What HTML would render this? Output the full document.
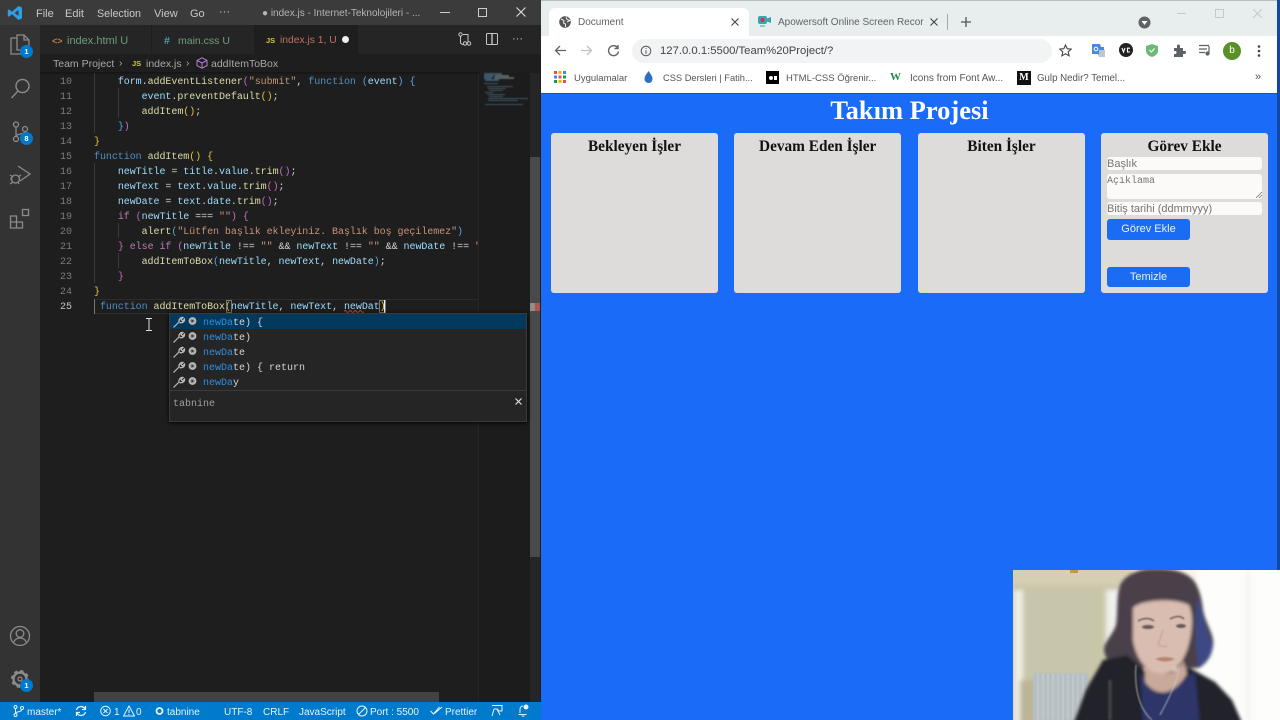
<!DOCTYPE html>
<html lang="tr"><head><meta charset="utf-8"><title>Recording</title>
<style>
html,body{margin:0;padding:0;width:1280px;height:720px;overflow:hidden;background:#1e1e1e;font-family:"Liberation Sans",sans-serif}
div,span{box-sizing:border-box}
.a{position:absolute;white-space:nowrap}
.menu{top:6px;font-size:11px;line-height:16px;color:#c8c8c8}
.ln{position:absolute;left:40px;width:32px;margin-top:2px;text-align:right;font:10px/15px "Liberation Mono",monospace;color:#7c7c7c}
.cl{position:absolute;left:94px;width:384px;margin-top:2px;overflow:hidden;white-space:pre;font:10px/15px "Liberation Mono",monospace;letter-spacing:-.05px;color:#d4d4d4}
.v{color:#9cdcfe}.f{color:#dcdcaa}.k{color:#4d90c8}.c{color:#b67fb0}.s{color:#c99278}.y{color:#e3c53a}.p{color:#c06cc0}.b{color:#57a5e0}
.g{position:absolute;width:1px;background:#3a3a3a}
.st{top:704px;font-size:10px;line-height:18px;color:#e8f3fb;position:absolute;white-space:nowrap}
.row{position:absolute;left:203px;margin-top:1.500px;font:10px/15px "Liberation Mono",monospace;color:#d4d4d4;white-space:pre}
.row b{font-weight:normal;color:#2f8ee0}
.bm{top:72px;font-size:9.500px;line-height:13px;color:#555;position:absolute;white-space:nowrap}
.card{position:absolute;top:133px;width:167px;height:160px;padding-top:1px;background:#dddcda;border-radius:3px;text-align:center;font:bold 15.300px/26px "Liberation Serif",serif;color:#111}
.inp{position:absolute;left:1107px;width:155px;background:#fbfaf8;border-radius:3px;color:#757575;font-size:11px;padding-top:1px}
.btn{position:absolute;left:1107px;width:83px;background:#1a6cf5;border-radius:3px;color:#eef;font-size:11px;text-align:center;padding-top:1px}
</style></head><body>

<!-- VS Code -->
<div class="a" style="left:0;top:0;width:541px;height:720px;background:#1e1e1e;overflow:hidden">
<div class="a" style="left:0;top:0;width:541px;height:25px;background:#3b3b3b"></div>
<svg class="a" style="left:7px;top:5px" width="16" height="16" viewBox="0 0 16 16"><path d="M11.500 1 15 2.600v10.800L11.500 15 5 9.300 2 11.600.8 11V5l1.200-.6 3 2.300zM11.500 5 7.600 8l3.900 3z" fill="#2f9fe6"/></svg>
<div class="a menu" style="left:36px">File</div><div class="a menu" style="left:65px">Edit</div><div class="a menu" style="left:97px;font-size:10.700px">Selection</div><div class="a menu" style="left:154px">View</div><div class="a menu" style="left:190px">Go</div><div class="a menu" style="left:219px;top:4px">···</div>
<div class="a menu" style="left:262px;font-size:10px;color:#b5b5b5">● index.js - Internet-Teknolojileri - ...</div>
<div class="a" style="left:440px;top:12px;width:10px;height:1px;background:#ccc"></div>
<div class="a" style="left:478px;top:8px;width:9px;height:9px;border:1px solid #ccc"></div>
<svg class="a" style="left:516px;top:7px" width="10" height="10"><path d="M.5.5l9 9M9.500.5l-9 9" stroke="#ddd" stroke-width="1.100"/></svg>

<!-- tabs -->
<div class="a" style="left:40px;top:25px;width:501px;height:29px;background:#252526"></div>
<div class="a" style="left:254px;top:25px;width:104px;height:29px;background:#1e1e1e"></div>
<div class="a" style="left:151px;top:25px;width:1px;height:29px;background:#1e1e1e"></div>
<div class="a" style="left:52px;top:34px;font-size:9px;line-height:14px;color:#c9793f;font-weight:bold">&lt;&gt;</div>
<div class="a" style="left:67px;top:33px;font-size:11px;line-height:16px;color:#6f9c7e">index.html U</div>
<div class="a" style="left:164px;top:33px;font-size:10.500px;line-height:16px;color:#519aba;font-weight:bold">#</div>
<div class="a" style="left:178px;top:33px;font-size:10.500px;line-height:16px;color:#6f9c7e">main.css U</div>
<div class="a" style="left:266px;top:35px;font-size:7.500px;line-height:12px;color:#cbcb41;font-weight:bold">JS</div>
<div class="a" style="left:280px;top:33px;font-size:10.300px;line-height:16px;color:#c2705e">index.js 1, U</div>
<div class="a" style="left:342px;top:36px;width:7px;height:7px;border-radius:50%;background:#eee"></div>
<svg class="a" style="left:458px;top:32px" width="14" height="15" viewBox="0 0 14 15" fill="none" stroke="#c5c5c5"><circle cx="2.500" cy="2.500" r="1.700"/><circle cx="11" cy="11.500" r="1.700"/><circle cx="7" cy="11.500" r="1.700"/><path d="M2.500 4.500V11L5 13M5 2.500h5v7"/></svg>
<svg class="a" style="left:486px;top:33px" width="12" height="12" fill="none" stroke="#c5c5c5"><rect x=".5" y=".5" width="11" height="11" rx="1"/><path d="M6 .5v11" stroke-width="1.400"/></svg>
<div class="a" style="left:512px;top:32px;font-size:11px;line-height:14px;color:#c5c5c5">···</div>

<!-- breadcrumb -->
<div class="a" style="left:53px;top:57px;font-size:10.500px;line-height:15px;color:#a9a9a9">Team Project</div>
<div class="a" style="left:119px;top:56px;font-size:10px;line-height:15px;color:#a9a9a9">›</div>
<div class="a" style="left:132px;top:58px;font-size:7.500px;line-height:12px;color:#cbcb41;font-weight:bold">JS</div>
<div class="a" style="left:146px;top:57px;font-size:10.500px;line-height:15px;color:#a9a9a9">index.js</div>
<div class="a" style="left:186px;top:56px;font-size:10px;line-height:15px;color:#a9a9a9">›</div>
<svg class="a" style="left:196px;top:57px" width="12" height="12" viewBox="0 0 12 12" fill="none" stroke="#b180d7"><path d="M6 .8 11 3.400v5.200L6 11.200 1 8.600V3.400zM1 3.400 6 6l5-2.600M6 6v5.200"/></svg>
<div class="a" style="left:211px;top:57px;font-size:10.500px;line-height:15px;color:#a9a9a9">addItemToBox</div>
<div class="a" style="left:40px;top:72px;width:440px;height:3px;background:linear-gradient(#151515,#1e1e1e)"></div>

<!-- activity bar -->
<div class="a" style="left:0;top:25px;width:40px;height:677px;background:#333"></div>
<svg class="a" style="left:9px;top:33px" width="22" height="24" viewBox="0 0 22 24" fill="none" stroke="#8b8b8b" stroke-width="1.300"><path d="M8 5h-6v16h11v-4M8 2h7l5 5v10H8zM15 2v5h5"/></svg>
<svg class="a" style="left:10px;top:78px" width="22" height="22" fill="none" stroke="#8b8b8b" stroke-width="1.400"><circle cx="12.500" cy="8" r="6.500"/><path d="M8 13 1.500 20"/></svg>
<svg class="a" style="left:11px;top:121px" width="20" height="24" fill="none" stroke="#8b8b8b" stroke-width="1.300"><circle cx="5" cy="3.500" r="2.500"/><circle cx="5" cy="18" r="2.500"/><circle cx="14" cy="8" r="2.500"/><path d="M5 6v9.500M14 10.500c0 3-9 2-9 5"/></svg>
<svg class="a" style="left:9px;top:164px" width="22" height="24" fill="none" stroke="#8b8b8b" stroke-width="1.300"><path d="M9 2 21 10 11 17"/><circle cx="6.500" cy="15" r="4"/><path d="M1 11l3 2M1 15h2M1 20l3-2M12 11 9 13M10 20l-1-2"/></svg>
<svg class="a" style="left:9px;top:208px" width="22" height="22" fill="none" stroke="#8b8b8b" stroke-width="1.300"><path d="M1.500 8h6v6h-6zM1.500 14h6v6h-6zM7.500 14h6v6h-6z"/><rect x="13.500" y="1.500" width="6" height="6"/></svg>
<svg class="a" style="left:9px;top:625px" width="22" height="22" fill="none" stroke="#8b8b8b" stroke-width="1.300"><circle cx="11" cy="11" r="9.500"/><circle cx="11" cy="8.500" r="3.800"/><path d="M4.500 17.500c1.500-3.500 4-4.500 6.500-4.500s5 1 6.500 4.500"/></svg>
<svg class="a" style="left:9px;top:668px" width="22" height="22" fill="none" stroke="#8b8b8b" stroke-width="2.400"><circle cx="11" cy="11" r="6.500"/><circle cx="11" cy="11" r="7.500" stroke-dasharray="3 2.900" stroke-width="3"/><circle cx="11" cy="11" r="2" stroke-width="1.200"/></svg>
<div class="a" style="left:20px;top:45px;width:13px;height:13px;border-radius:50%;background:#007acc;color:#fff;font-size:7.500px;line-height:13px;text-align:center;font-weight:bold">1</div>
<div class="a" style="left:20px;top:132px;width:13px;height:13px;border-radius:50%;background:#007acc;color:#fff;font-size:7.500px;line-height:13px;text-align:center;font-weight:bold">8</div>
<div class="a" style="left:20px;top:679px;width:13px;height:13px;border-radius:50%;background:#007acc;color:#fff;font-size:7.500px;line-height:13px;text-align:center;font-weight:bold">1</div>

<!-- minimap region -->
<div class="a" style="left:478px;top:73px;width:52px;height:629px;background:#1c1c1c;border-left:1px solid #252525"></div>
<svg class="a" style="left:483px;top:72px" width="47" height="36" style="opacity:.6">
<defs><filter id="mm"><feGaussianBlur stdDeviation=".45"/></filter></defs>
<g filter="url(#mm)" opacity=".6">
<g fill="#4d7f9e"><rect x="1" y="1" width="18" height="2"/><rect x="1" y="3" width="10" height="2"/><rect x="12" y="3" width="14" height="2" fill="#7d8f86"/><rect x="1" y="5" width="8" height="2"/><rect x="11" y="5" width="20" height="2" fill="#7d8f86"/><rect x="2" y="7" width="14" height="2"/></g>
<g fill="#58798f"><rect x="1" y="11" width="14" height="1"/><rect x="4" y="14" width="26" height="1"/><rect x="5" y="16" width="18" height="1"/><rect x="6" y="18" width="14" height="1"/><rect x="2" y="20" width="8" height="1"/><rect x="4" y="22" width="18" height="1"/><rect x="6" y="24" width="14" height="1"/><rect x="5" y="26" width="40" height="1"/><rect x="5" y="28" width="30" height="1"/><rect x="2" y="32" width="38" height="1"/></g>
</g>
</svg>
<div class="a" style="left:530px;top:73px;width:10px;height:629px;background:#252525"></div>
<div class="a" style="left:530px;top:157px;width:10px;height:400px;background:#4a4a4a"></div>
<div class="a" style="left:530px;top:303px;width:10px;height:8px;background:#8f8f8f"></div>
<div class="a" style="left:535px;top:303px;width:5px;height:8px;background:#b4544c"></div>
<div class="a" style="left:94px;top:692px;width:345px;height:10px;background:#424242"></div>

<!-- indent guides -->
<div class="g" style="left:94px;top:73px;height:60px"></div>
<div class="g" style="left:118px;top:88px;height:30px"></div>
<div class="g" style="left:94px;top:163px;height:120px"></div>
<div class="g" style="left:118px;top:223px;height:15px"></div>
<div class="g" style="left:118px;top:253px;height:15px"></div>
<div class="a" style="left:94px;top:299px;width:384px;height:15px;border-top:1px solid #2c2c2c;border-bottom:1px solid #2c2c2c"></div>
<div class="a" style="left:94px;top:299px;width:1px;height:15px;background:#777"></div>

<!-- line numbers -->
<div class="ln" style="top:73px">10</div><div class="ln" style="top:88px">11</div><div class="ln" style="top:103px">12</div><div class="ln" style="top:118px">13</div><div class="ln" style="top:133px">14</div><div class="ln" style="top:148px">15</div><div class="ln" style="top:163px">16</div><div class="ln" style="top:178px">17</div><div class="ln" style="top:193px">18</div><div class="ln" style="top:208px">19</div><div class="ln" style="top:223px">20</div><div class="ln" style="top:238px">21</div><div class="ln" style="top:253px">22</div><div class="ln" style="top:268px">23</div><div class="ln" style="top:283px">24</div><div class="ln" style="top:298px;color:#c6c6c6">25</div>

<!-- code -->
<div class="cl" style="top:73px">    <span class="v">form</span>.<span class="f">addEventListener</span><span class="p">(</span><span class="s">"submit"</span>, <span class="k">function</span> <span class="b">(</span><span class="v">event</span><span class="b">)</span> <span class="b">{</span></div>
<div class="cl" style="top:88px">        <span class="v">event</span>.<span class="f">preventDefault</span><span class="y">()</span>;</div>
<div class="cl" style="top:103px">        <span class="f">addItem</span><span class="y">()</span>;</div>
<div class="cl" style="top:118px">    <span class="b">}</span><span class="p">)</span></div>
<div class="cl" style="top:133px"><span class="y">}</span></div>
<div class="cl" style="top:148px"><span class="k">function</span> <span class="f">addItem</span><span class="y">()</span> <span class="y">{</span></div>
<div class="cl" style="top:163px">    <span class="v">newTitle</span> = <span class="v">title</span>.<span class="v">value</span>.<span class="f">trim</span><span class="p">()</span>;</div>
<div class="cl" style="top:178px">    <span class="v">newText</span> = <span class="v">text</span>.<span class="v">value</span>.<span class="f">trim</span><span class="p">()</span>;</div>
<div class="cl" style="top:193px">    <span class="v">newDate</span> = <span class="v">text</span>.<span class="v">date</span>.<span class="f">trim</span><span class="p">()</span>;</div>
<div class="cl" style="top:208px">    <span class="c">if</span> <span class="p">(</span><span class="v">newTitle</span> === <span class="s">""</span><span class="p">)</span> <span class="p">{</span></div>
<div class="cl" style="top:223px">        <span class="f">alert</span><span class="b">(</span><span class="s">"Lütfen başlık ekleyiniz. Başlık boş geçilemez"</span><span class="b">)</span></div>
<div class="cl" style="top:238px">    <span class="p">}</span> <span class="c">else if</span> <span class="p">(</span><span class="v">newTitle</span> !== <span class="s">""</span> &amp;&amp; <span class="v">newText</span> !== <span class="s">""</span> &amp;&amp; <span class="v">newDate</span> !== <span class="s">""</span></div>
<div class="cl" style="top:253px">        <span class="f">addItemToBox</span><span class="b">(</span><span class="v">newTitle</span>, <span class="v">newText</span>, <span class="v">newDate</span><span class="b">)</span>;</div>
<div class="cl" style="top:268px">    <span class="p">}</span></div>
<div class="cl" style="top:283px"><span class="y">}</span></div>
<div class="cl" style="top:298px"> <span class="k">function</span> <span class="f">addItemToBox</span><span class="y">(</span><span class="v">newTitle</span>, <span class="v">newText</span>, <span class="v">newDat</span><span class="y">)</span></div>
<div class="a" style="left:226px;top:300px;width:6px;height:13px;border:1px solid #777"></div>
<div class="a" style="left:379px;top:300px;width:7px;height:13px;border:1px solid #777"></div>
<div class="a" style="left:384px;top:300px;width:1px;height:13px;background:#eee"></div>
<svg class="a" style="left:344px;top:310px" width="20" height="3"><path d="M0 1.500q1.250-2 2.500 0t2.500 0 2.500 0 2.500 0 2.500 0 2.500 0 2.500 0 2.500 0" fill="none" stroke="#c8443c"/></svg>
<!-- I-beam -->
<svg class="a" style="left:145px;top:318px" width="8" height="13"><path d="M1 .5h6M1 12.500h6M4 .5v12" stroke="#ddd" fill="none"/></svg>

<!-- suggest -->
<div class="a" style="left:169px;top:313px;width:358px;height:109px;background:#252526;border:1px solid #3a3a3a;box-shadow:0 1px 4px #000"></div>
<div class="a" style="left:170px;top:314px;width:356px;height:15px;background:#04395e"></div>
<div class="a" style="left:170px;top:390px;width:356px;height:1px;background:#3a3a3a"></div>
<svg class="a" style="left:172px;top:315px" width="26" height="76" fill="none">
<g stroke="#bdbdbd" stroke-width="1.200"><path d="M1.500 12.500 7 7M7 7c-.5-3 2-5 4-4.500L9 4.500l1.500 1.500 2-2c.5 2-1.500 4.500-5 3.500"/><path d="M1.500 27.500 7 22M7 22c-.5-3 2-5 4-4.500L9 19.500l1.500 1.500 2-2c.5 2-1.500 4.500-5 3.500"/><path d="M1.500 42.500 7 37M7 37c-.5-3 2-5 4-4.500L9 34.500l1.500 1.500 2-2c.5 2-1.500 4.500-5 3.500"/><path d="M1.500 57.500 7 52M7 52c-.5-3 2-5 4-4.500L9 49.500l1.500 1.500 2-2c.5 2-1.500 4.500-5 3.500"/><path d="M1.500 72.500 7 67M7 67c-.5-3 2-5 4-4.500L9 64.500l1.500 1.500 2-2c.5 2-1.500 4.500-5 3.500"/></g>
<g fill="#999" stroke="#bdbdbd" stroke-width="1.400"><circle cx="20.500" cy="6" r="3.200"/><circle cx="20.500" cy="21" r="3.200"/><circle cx="20.500" cy="36" r="3.200"/><circle cx="20.500" cy="51" r="3.200"/><circle cx="20.500" cy="66" r="3.200"/></g>
<g fill="#2a2a2a"><path d="M19.500 4.500l2.500 1.500-2.500 1.500zM19.500 19.500l2.500 1.500-2.500 1.500zM19.500 34.500l2.500 1.500-2.500 1.500zM19.500 49.500l2.500 1.500-2.500 1.500zM19.500 64.500l2.500 1.500-2.500 1.500z"/></g></svg>
<div class="row" style="top:314px"><b>newDa</b>te) {</div>
<div class="row" style="top:329px"><b>newDa</b>te)</div>
<div class="row" style="top:344px"><b>newDa</b>te</div>
<div class="row" style="top:359px"><b>newDa</b>te) { return</div>
<div class="row" style="top:374px"><b>newDa</b>y</div>
<div class="a" style="left:173px;top:397px;font:10px/15px 'Liberation Mono',monospace;color:#a0a0a0">tabnine</div>
<svg class="a" style="left:515px;top:398px" width="7" height="7"><path d="M.5.5l6 6M6.500.5l-6 6" stroke="#ddd" stroke-width="1.200"/></svg>

<!-- status -->
<div class="a" style="left:0;top:702px;width:541px;height:18px;background:#007acc"></div>
<svg class="a" style="left:13px;top:705px" width="11" height="12" fill="none" stroke="#e8f3fb"><circle cx="2.500" cy="2" r="1.500"/><circle cx="2.500" cy="10" r="1.500"/><circle cx="9" cy="3" r="1.500"/><path d="M2.500 3.500v5M9 4.500c0 3-6.500 1.500-6.500 4"/></svg>
<div class="st" style="left:27px">master*</div>
<svg class="a" style="left:75px;top:705px" width="12" height="12" fill="none" stroke="#e8f3fb" stroke-width="1.300"><path d="M1.500 5a4.600 4.600 0 0 1 8.500-1M10.500 7a4.600 4.600 0 0 1-8.500 1M10.500 1v3.500H7M1.500 11V7.500H5"/></svg>
<svg class="a" style="left:100px;top:705px" width="11" height="12" fill="none" stroke="#e8f3fb"><circle cx="5.500" cy="6" r="4.800"/><path d="M3.500 4l4 4M7.500 4l-4 4"/></svg>
<div class="st" style="left:114px">1</div>
<svg class="a" style="left:123px;top:705px" width="12" height="12" fill="none" stroke="#e8f3fb"><path d="M6 1 11.500 11H.5zM6 4.500v3.500M6 9v1"/></svg>
<div class="st" style="left:136px">0</div>
<svg class="a" style="left:155px;top:706px" width="9" height="10"><circle cx="4.500" cy="5" r="3" fill="none" stroke="#e8f3fb" stroke-width="1.800"/></svg>
<div class="st" style="left:167px">tabnine</div>
<div class="st" style="left:224px">UTF-8</div>
<div class="st" style="left:263px">CRLF</div>
<div class="st" style="left:299px">JavaScript</div>
<svg class="a" style="left:356px;top:705px" width="12" height="12" fill="none" stroke="#e8f3fb"><circle cx="6" cy="6" r="5"/><path d="M2.500 9.500l7-7"/></svg>
<div class="st" style="left:370px">Port : 5500</div>
<svg class="a" style="left:430px;top:706px" width="13" height="10" fill="none" stroke="#e8f3fb"><path d="M.5 5l3 3 6-7M4.500 7.500 12 1"/></svg>
<div class="st" style="left:445px">Prettier</div>
<svg class="a" style="left:491px;top:704px" width="12" height="13" fill="none" stroke="#e8f3fb"><path d="M1 1.500h10V7H7v-2M3 5 1 12M3 5h3l3 6"/></svg>
<svg class="a" style="left:517px;top:704px" width="12" height="13" fill="none" stroke="#e8f3fb"><path d="M3 9V5.500C3 3 4.500 2 6 2M1.500 10.500h8M5 11.500c0 1 2 1 2 0"/><circle cx="9" cy="3" r="2" fill="#e8f3fb"/></svg>
</div>

<!-- Browser -->
<div class="a" style="left:541px;top:0;width:739px;height:720px;background:#196bf8;overflow:hidden">
<div class="a" style="left:0;top:0;width:739px;height:36px;background:#e8eded;border-top:1px solid #b8bcbd"></div>
<div class="a" style="left:8px;top:8px;width:200px;height:28px;background:#fff;border-radius:6px 6px 0 0"></div>
<svg class="a" style="left:18px;top:16px" width="12" height="12"><circle cx="6" cy="6" r="5.800" fill="#555"/><path d="M2 3l3 1.500-.5 2.500 2 1v3M7 1l1 2.500 3 1-3 1.500" stroke="#eee" fill="none"/></svg>
<div class="a" style="left:37px;top:15px;font-size:10px;line-height:15px;color:#5f6368">Document</div>
<svg class="a" style="left:190px;top:18px" width="8" height="8"><path d="M.5.5l7 7M7.500.5l-7 7" stroke="#444" stroke-width="1.100"/></svg>
<svg class="a" style="left:216px;top:15px" width="15" height="13"><rect x="1" y="1" width="9" height="8" rx="2" fill="#35a5b5"/><circle cx="5.500" cy="5" r="2" fill="#d33"/><path d="M10 3.500l4-1.500v6l-4-1.500z" fill="#35a5b5"/><path d="M3 11h5" stroke="#35a5b5"/></svg>
<div class="a" style="left:237px;top:15px;width:146px;overflow:hidden;font-size:10px;line-height:15px;color:#5f6368">Apowersoft Online Screen Recorder</div>
<svg class="a" style="left:389px;top:18px" width="8" height="8"><path d="M.5.5l7 7M7.500.5l-7 7" stroke="#444" stroke-width="1.100"/></svg>
<div class="a" style="left:406px;top:14px;width:1px;height:16px;background:#a5a8aa"></div>
<svg class="a" style="left:420px;top:17px" width="10" height="10"><path d="M5 0v10M0 5h10" stroke="#555" stroke-width="1.300"/></svg>
<svg class="a" style="left:597px;top:16px" width="13" height="13"><circle cx="6.500" cy="6.500" r="6" fill="#5f6368"/><path d="M3.500 5h6L6.500 9z" fill="#fff"/></svg>
<div class="a" style="left:636px;top:13px;width:9px;height:1px;background:#c5c8c8"></div>
<div class="a" style="left:674px;top:9px;width:9px;height:9px;border:1px solid #c5c8c8"></div>
<svg class="a" style="left:712px;top:9px" width="9" height="9"><path d="M0 0l9 9M9 0l-9 9" stroke="#c5c8c8"/></svg>

<div class="a" style="left:0;top:36px;width:739px;height:57px;background:#fff"></div>
<svg class="a" style="left:13px;top:44px" width="13" height="13" fill="none" stroke="#5f6368" stroke-width="1.300"><path d="M12 6.500H1.500M6 2 1.500 6.500 6 11"/></svg>
<svg class="a" style="left:39px;top:44px" width="13" height="13" fill="none" stroke="#bdc1c6" stroke-width="1.300"><path d="M1 6.500h10.500M7 2l4.500 4.500L7 11"/></svg>
<svg class="a" style="left:66px;top:44px" width="13" height="13" fill="none" stroke="#5f6368" stroke-width="1.400"><path d="M10.800 4A5 5 0 1 0 11.500 7.500M11 1v3.500H7.500"/></svg>
<div class="a" style="left:91px;top:39px;width:420px;height:24px;background:#f1f3f4;border-radius:12px"></div>
<svg class="a" style="left:99px;top:45px" width="12" height="12" fill="none" stroke="#555"><circle cx="6" cy="6" r="4.800"/><path d="M6 3v.9M6 5.200V9" /></svg>
<div class="a" style="left:119px;top:43px;font-size:11.300px;line-height:16px;color:#444">127.0.0.1:5500/Team%20Project/?</div>
<svg class="a" style="left:518px;top:44px" width="13" height="13" fill="none" stroke="#444" stroke-width="1.100"><path d="M6.500 1l1.700 3.700 4 .4-3 2.700.9 4-3.600-2-3.600 2 .9-4-3-2.700 4-.4z"/></svg>
<svg class="a" style="left:550px;top:43px" width="15" height="15"><path d="M1 1h8l1 3h3v9H8L7 11H1z" fill="#4a86e8"/><path d="M8 7h6v7H8z" fill="#b9c6dc"/><circle cx="5" cy="6" r="1.800" fill="none" stroke="#fff"/></svg>
<svg class="a" style="left:578px;top:43px" width="14" height="14"><circle cx="7" cy="7" r="7" fill="#222"/><path d="M3 5l1.500 4L6 5M11 5.200H8.500V9H11" fill="none" stroke="#fff" stroke-width="1.100"/></svg>
<svg class="a" style="left:604px;top:43px" width="14" height="15"><path d="M7 1l6 2v5c0 3-3 5-6 6-3-1-6-3-6-6V3z" fill="#6dba77"/><path d="M4.500 7l2 2 3-3.500" stroke="#fff" fill="none"/></svg>
<svg class="a" style="left:632px;top:44px" width="13" height="13"><path d="M1 4h3V2a1.500 1.500 0 0 1 3 0v2h3v3h1.500a1.500 1.500 0 0 1 0 3H10v3H1v-3h1a1.500 1.500 0 0 0 0-3H1z" fill="#5f6368"/></svg>
<svg class="a" style="left:657px;top:44px" width="14" height="12" fill="none" stroke="#5f6368" stroke-width="1.200"><path d="M1 1.500h10M1 5h8M1 8.500h6M11 2v7"/><circle cx="9.500" cy="9.500" r="1.500" fill="#5f6368"/></svg>
<div class="a" style="left:682px;top:42px;width:18px;height:18px;border-radius:50%;background:#5a9027;color:#fff;font-size:10px;line-height:18px;text-align:center">b</div>
<svg class="a" style="left:716px;top:45px" width="4" height="12"><circle cx="2" cy="1.500" r="1.300" fill="#444"/><circle cx="2" cy="6" r="1.300" fill="#444"/><circle cx="2" cy="10.500" r="1.300" fill="#444"/></svg>

<!-- bookmarks -->
<svg class="a" style="left:13px;top:71px" width="12" height="12"><g fill="#e25444"><rect width="3" height="3"/><rect x="4.500" width="3" height="3" fill="#f4b400"/><rect x="9" width="3" height="3" fill="#4285f4"/><rect y="4.500" width="3" height="3" fill="#4285f4"/><rect x="4.500" y="4.500" width="3" height="3"/><rect x="9" y="4.500" width="3" height="3" fill="#0f9d58"/><rect y="9" width="3" height="3" fill="#0f9d58"/><rect x="4.500" y="9" width="3" height="3" fill="#f4b400"/><rect x="9" y="9" width="3" height="3"/></g></svg>
<div class="bm" style="left:33px">Uygulamalar</div>
<svg class="a" style="left:103px;top:71px" width="9" height="13"><path d="M4.500 0C6.500 3 8.500 5 8.500 8a4 4 0 0 1-8 0C.5 5 2.500 3 4.500 0z" fill="#2e6fc4"/></svg>
<div class="bm" style="left:122px;font-size:9.300px">CSS Dersleri | Fatih...</div>
<div class="a" style="left:225px;top:71px;width:13px;height:13px;background:#000"></div>
<div class="a" style="left:227.500px;top:75.500px;width:4px;height:4px;border-radius:50%;background:#fff"></div>
<div class="a" style="left:232.500px;top:75.500px;width:2px;height:4px;background:#fff"></div>
<div class="a" style="left:235px;top:75.500px;width:1px;height:4px;background:#fff"></div>
<div class="bm" style="left:245px">HTML-CSS Öğrenir...</div>
<div class="a" style="left:349px;top:71px;font:bold 11px/13px 'Liberation Serif',serif;color:#1f8a4c">W</div>
<div class="bm" style="left:369px;font-size:10px">Icons from Font Aw...</div>
<div class="a" style="left:476px;top:71px;width:14px;height:14px;background:#111;color:#fff;font:bold 10px/14px 'Liberation Serif',serif;text-align:center">M</div>
<div class="bm" style="left:496px;font-size:9.700px">Gulp Nedir? Temel...</div>
<div class="a" style="left:714px;top:70px;font-size:11px;line-height:14px;color:#555">»</div>

<!-- page -->
<div class="a" style="left:0;top:93px;width:736px;height:627px;background:#196bf8"></div>
<div class="a" style="left:736px;top:0;width:3px;height:720px;background:#1247a8"></div>
<div class="a" style="left:0;top:93px;width:736px;height:1px;background:#1552bb"></div>
</div>
<div class="a" style="left:541px;top:95px;width:737px;text-align:center;font:bold 26.500px/30px 'Liberation Serif',serif;color:#fff">Takım Projesi</div>
<div class="card" style="left:551px">Bekleyen İşler</div>
<div class="card" style="left:734.200px">Devam Eden İşler</div>
<div class="card" style="left:918px">Biten İşler</div>
<div class="card" style="left:1101px">Görev Ekle</div>
<div class="inp" style="top:157px;height:13px;line-height:12px">Başlık</div>
<div class="inp" style="top:173.500px;height:25.500px;font:10px/13px 'Liberation Mono',monospace">Açıklama</div>
<svg class="a" style="left:1256px;top:192px" width="6" height="6"><path d="M0 6l6-6M3 6l3-3" stroke="#666" stroke-width=".7"/></svg>
<div class="inp" style="top:202px;height:13px;line-height:12px">Bitiş tarihi (ddmmyyy)</div>
<div class="btn" style="top:219px;height:21px;line-height:19px">Görev Ekle</div>
<div class="btn" style="top:267px;height:20px;line-height:18px">Temizle</div>

<!-- Webcam -->
<svg class="a" style="left:1013px;top:570px" width="267" height="150" viewBox="1013 570 267 150">
<defs><filter id="bl"><feGaussianBlur stdDeviation="1.500"/></filter><filter id="bl2"><feGaussianBlur stdDeviation="2.500"/></filter><filter id="bl3"><feGaussianBlur stdDeviation=".7"/></filter></defs>
<rect x="1013" y="570" width="267" height="150" fill="#f6f5ee"/>
<g filter="url(#bl2)">
<rect x="1008" y="565" width="125" height="22" fill="#d6cfb4"/>
<rect x="1008" y="585" width="112" height="140" fill="#c9c6a8"/>
<rect x="1014" y="590" width="9" height="135" fill="#efeee6"/>
<rect x="1024" y="590" width="72" height="90" fill="#c7c5ab"/>
<rect x="1020" y="680" width="90" height="45" fill="#bdb596"/>
<rect x="1106" y="590" width="14" height="55" fill="#f0f0ec"/>
<rect x="1198" y="565" width="90" height="160" fill="#fdfdfb"/>
<rect x="1247" y="570" width="2" height="150" fill="#e6e9e5"/>
</g>
<rect x="1070" y="570" width="8" height="3" fill="#c59a3c"/>
<rect x="1033" y="673" width="55" height="47" fill="#b6bfc3" filter="url(#bl3)"/>
<g stroke="#cdd4d6" stroke-width="1" opacity=".8"><path d="M1038 674v46M1043 674v46M1048 674v46M1053 674v46M1058 674v46M1063 674v46M1068 674v46M1073 674v46M1078 674v46M1083 674v46"/></g>
<g filter="url(#bl)">
<path d="M1120 585C1126 574 1140 568 1155 569 1172 568 1190 572 1196 584 1201 594 1202 602 1203 610 1206 625 1215 635 1213 646 1211 656 1208 662 1199 668L1127 668C1117 668 1106 664 1104 650 1104 642 1112 636 1116 625 1118 612 1116 598 1120 585z" fill="#4a3f48"/>
<path d="M1198 597c5 15 6 30 15 48-1 12-7 19-15 22-3-20-3-50 0-70z" fill="#3e4a84"/>
<path d="M1073 725 1086 690 1103 660 1127 655 1150 675 1190 668 1215 682 1232 700 1243 725z" fill="#22242a"/>
<path d="M1140 673 1160 695 1195 672 1200 725 1143 725z" fill="#2d3567"/>
<path d="M1133 605C1138 593 1150 589 1165 590 1182 591 1192 600 1192 622 1191 650 1180 672 1164 674 1148 675 1136 660 1133 640z" fill="#d9bdb0"/>
<path d="M1145 664c6 14 34 14 38-4l4 14c-14 22-30 24-42 8z" fill="#c9a99a"/>
<path d="M1133 608c8-9 47-11 59-1 2-14-12-25-29-24-17 0-32 9-30 25z" fill="#4a3f48"/>
</g>
<g filter="url(#bl3)">
<path d="M1138 621q9-5 16 0M1170 619q9-5 14 0" stroke="#5a4a48" stroke-width="1.300" fill="none"/>
<ellipse cx="1148" cy="627" rx="6" ry="2" fill="#6b5656"/><ellipse cx="1181" cy="626" rx="5" ry="2" fill="#6b5656"/>
<path d="M1163 630q-3 10-5 14 4 4 9 2" stroke="#c39d90" fill="none"/>
<path d="M1155 659q10-4 20 0-10 5-20 0z" fill="#b78378"/>
<path d="M1136 665c-2 25 4 45 16 55M1180 665c-3 18-12 35-20 50" stroke="#c9c9c9" stroke-width=".8" fill="none"/>
<rect x="1108" y="680" width="4" height="40" fill="#3a3c40"/>
</g>
</svg>
</body></html>
